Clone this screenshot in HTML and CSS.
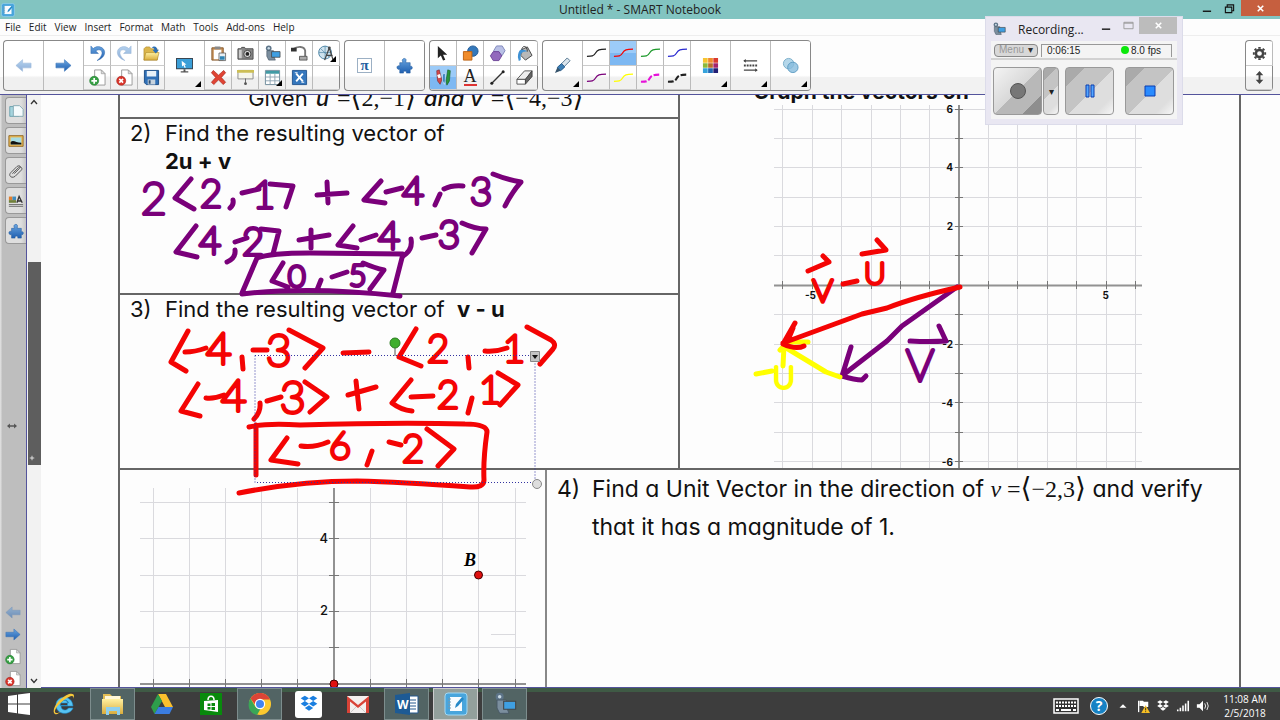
FILE: index.html
```html
<!DOCTYPE html>
<html lang="en">
<head>
  <meta charset="UTF-8">
  <meta name="viewport" content="width=device-width, initial-scale=1">
  <title>Untitled * - SMART Notebook</title>
  <link rel="stylesheet" href="styles.css">
</head>
<body>
  <!-- shared icons -->
  <svg class="sprite" aria-hidden="true">
    <defs>
      <linearGradient id="gBlue" x1="0" y1="0" x2="0" y2="1"><stop offset="0" stop-color="#6aa5e0"/><stop offset="1" stop-color="#1f5fb0"/></linearGradient>
      <linearGradient id="gFolder" x1="0" y1="0" x2="0" y2="1"><stop offset="0" stop-color="#fff0a0"/><stop offset="1" stop-color="#d9ac3c"/></linearGradient>
      <symbol id="arrow" viewBox="0 0 18 14"><path d="M1 4.500h9V.8L17 7l-7 6.200V9.500H1z" fill="url(#gBlue)" stroke="#3a74b8" stroke-width=".6"/></symbol>
      <symbol id="undo" viewBox="0 0 18 18"><path d="M2 1v8h8L7.200 6.400C11 3.500 15 6 13.500 10c-.8 2.500-2.500 4.500-5 6.500C14 14.500 17 11 16.500 7 16 2.500 9-.5 4.500 3.800z" fill="url(#gBlue)" stroke="#2f67ab" stroke-width=".5"/></symbol>
      <symbol id="page" viewBox="0 0 18 18"><path d="M6 1h7l4 4v12H6z" fill="#fff" stroke="#999"/><path d="M13 1v4h4z" fill="#ddd" stroke="#999" stroke-width=".7"/></symbol>
      <symbol id="pageAdd" viewBox="0 0 18 18"><use href="#page"/><circle cx="5.500" cy="12.500" r="4.800" fill="#37a044" stroke="#1d7a2c" stroke-width=".6"/><path d="M5.500 9.500v6M2.500 12.500h6" stroke="#fff" stroke-width="1.800"/></symbol>
      <symbol id="pageDel" viewBox="0 0 18 18"><use href="#page"/><circle cx="5.500" cy="12.500" r="4.800" fill="#d9362c" stroke="#a11d16" stroke-width=".6"/><path d="M3.500 10.500l4 4M7.500 10.500l-4 4" stroke="#fff" stroke-width="1.800"/></symbol>
      <symbol id="folder" viewBox="0 0 18 18"><path d="M1 4l2-2h4l1.500 2H15v12H1z" fill="#dcb64c" stroke="#a8821f" stroke-width=".6"/><path d="M1 16L3 8h14l-2 8z" fill="url(#gFolder)" stroke="#a8821f" stroke-width=".6"/><path d="M9 3c3-3 6-1 6 2h2l-3.500 4L10 5h2c0-1.500-1-2.500-3-2z" fill="#2d6fb5"/></symbol>
      <symbol id="save" viewBox="0 0 18 18"><path d="M1.500 1.500h15v15h-13l-2-2z" fill="#2f6fb6" stroke="#1c4c86"/><path d="M4 2h10v6H4z" fill="#e7f0f8"/><path d="M5 11h8v5.500H5z" fill="#c7d3de"/><path d="M6 12h2v3.500H6z" fill="#2b4c72"/></symbol>
      <symbol id="screen" viewBox="0 0 18 18"><path d="M0 1h18v12H0z" fill="#3a4652"/><path d="M1 2h16v10H1z" fill="#3b9fd8"/><path d="M6 4l5 4-2 .3L10.500 11 9 11.500 8 8.800 6.400 10z" fill="#fff"/><path d="M8 13h2v2h3v1.500H5V15h3z" fill="#555"/></symbol>
      <symbol id="paste" viewBox="0 0 18 18"><path d="M2 3h12v13H2z" fill="#c8925a" stroke="#86592a"/><path d="M4 5h8v10H4z" fill="#fff"/><path d="M5 1.500h6v3H5z" fill="#888"/><path d="M9.500 8.500h7v8h-7z" fill="#e8eef2" stroke="#555" stroke-width=".8"/><path d="M10.500 12h5v3.500h-5z" fill="#2f84b4"/></symbol>
      <symbol id="cross" viewBox="0 0 18 18"><path d="M3.500 1.500L9 6.500l5.500-5 2 2.500L12 9l4.500 5-2.500 2.500-5-5-5 5L1.500 14 6 9 1.500 4z" fill="#e04434" stroke="#a92318" stroke-width=".7"/></symbol>
      <symbol id="camera" viewBox="0 0 18 18"><path d="M1 4h3l1-1.500h3L9 4h8v11H1z" fill="#888" stroke="#4c4c4c"/><path d="M2 5h3v9H2z" fill="#ccc"/><circle cx="11" cy="9.500" r="3.800" fill="#ddd" stroke="#444"/><circle cx="11" cy="9.500" r="2" fill="#222"/></symbol>
      <symbol id="shade" viewBox="0 0 18 18"><path d="M1 1.500h16v9H1z" fill="#f7f7ea" stroke="#888"/><path d="M0 1h18v3H0z" fill="#cdbf54"/><path d="M9 10v5" stroke="#666"/><circle cx="9" cy="15.500" r="1.500" fill="#555"/></symbol>
      <symbol id="camcorder" viewBox="0 0 18 18"><circle cx="5" cy="3.500" r="3" fill="#5d7488"/><circle cx="5" cy="3.500" r="1.300" fill="#c9dae5"/><path d="M3 6h7v5l2 5H5L3 12z" fill="#7b8e9e" stroke="#485866" stroke-width=".7"/><path d="M8 7h9v6H8z" fill="#3f9fe2" stroke="#444" stroke-width=".8"/></symbol>
      <symbol id="table" viewBox="0 0 18 18"><path d="M1.500 1.500h15v15h-15z" fill="#fff" stroke="#6d8a9b"/><path d="M2 2h14v3H2z" fill="#419ba5"/><path d="M2 8.500h14M2 12.500h14M6.500 5v11M11.500 5v11" stroke="#8fa5b2"/></symbol>
      <symbol id="doccam" viewBox="0 0 18 18"><path d="M2 4.500C7 1 14 1 15 6v6" fill="none" stroke="#777" stroke-width="2"/><path d="M0 3h6v4H0z" fill="#333"/><path d="M9 12h8v4H9z" fill="#aaa" stroke="#444" stroke-width=".8"/></symbol>
      <symbol id="fx" viewBox="0 0 18 18"><path d="M1.500 1.500h15v15h-15z" fill="#3577bd" stroke="#245691"/><path d="M5.500 5l7 8M12.500 5l-7 8" stroke="#fff" stroke-width="2"/><path d="M4 4h3M11 14h3" stroke="#fff"/></symbol>
      <symbol id="compass" viewBox="0 0 18 18"><circle cx="7.500" cy="8" r="6.800" fill="#cfe3ee" stroke="#4a83a4"/><path d="M1 8h13M7.500 1v14M3 4l9 9" stroke="#4a83a4" stroke-width=".7"/><path d="M12 3l-5 13M12 3l4 13M8.500 11h7" stroke="#444" stroke-width="1.300"/><circle cx="12" cy="3" r="1.500" fill="#444"/></symbol>
      <symbol id="puzzle" viewBox="0 0 18 18"><path d="M7 5c-2-4 5-5 3.500-.5V6H15v4c3-1.500 3 4 0 3v4h-4c1-3-4-3-3 0H4v-4C0 14 0 8 4 9.500V6h3z" fill="url(#gBlue)" stroke="#245ca0" stroke-width=".6"/></symbol>
      <symbol id="cursor" viewBox="0 0 18 18"><path d="M3 1v13l3.200-3 2.300 5.500 2.400-1-2.400-5.300H13z" fill="#222"/></symbol>
      <symbol id="shapes" viewBox="0 0 18 18"><circle cx="11.500" cy="6.500" r="5.500" fill="#3478bb" stroke="#235b96"/><path d="M1.500 7h9v9h-9z" fill="#f08c2c" stroke="#bd6211"/></symbol>
      <symbol id="polys" viewBox="0 0 18 18"><path d="M8 1h6l3 5-3 5H8L5 6z" fill="#b9c0e6" stroke="#7d86ba"/><path d="M4.500 7h6l3 4.500-3 5h-6l-3-5z" fill="#9269bd" stroke="#6c4598"/></symbol>
      <symbol id="bucket" viewBox="0 0 18 18"><path d="M6 5l6-3 5 9-7 5-5-5z" fill="#b8b8b8" stroke="#444"/><path d="M6 6c0-6 6-6 6 1" fill="none" stroke="#333"/><path d="M5 5c3 0 5 0 7 2-3 0-5 0-7 3v6L3 17l-1-4c0-4 1-7 3-8z" fill="#3e91d4"/></symbol>
      <symbol id="pens" viewBox="0 0 20 20"><path d="M2 2l3-1 3 12-2 5-3-4z" fill="#d3494b" stroke="#7d2527" stroke-width=".7"/><path d="M2.500 7l3.500-1 1 4-3 1z" fill="#fff"/><path d="M9 6l3-1v9l-1 4-2-4z" fill="#2d7bbd" stroke="#fff" stroke-width=".6"/><path d="M15 1l3 1-1 12-3 5-1-5z" fill="#29943b" stroke="#165d22" stroke-width=".7"/></symbol>
      <symbol id="line" viewBox="0 0 18 18"><path d="M3 15L15 3" stroke="#333" stroke-width="1.400"/><circle cx="3" cy="15" r="1.600" fill="#222"/><circle cx="15" cy="3" r="1.600" fill="#222"/></symbol>
      <symbol id="eraser" viewBox="0 0 18 18"><path d="M1 11L9 2h8l-7 9z" fill="#eee" stroke="#555"/><path d="M1 11h9v5H1z" fill="#fff" stroke="#555"/><path d="M10 11l7-9v6l-7 8z" fill="#666" stroke="#444"/></symbol>
      <symbol id="pen" viewBox="0 0 18 18"><path d="M14 1l3 3-9 9-3-3z" fill="#dce6ed" stroke="#54758f"/><path d="M8 7l3.500 3.500L7 14.500 3.500 11z" fill="#3d7fb5" stroke="#275c8c"/><path d="M3.500 11L7 14.500 1 17z" fill="#36546c"/></symbol>
      <symbol id="stroke" viewBox="0 0 22 12"><path d="M1 9.500c5 0 7 0 9-3.500s4-4 11-4" fill="none" stroke="currentColor" stroke-width="1.300"/></symbol>
      <symbol id="dashed" viewBox="0 0 22 12"><path d="M1 10c5 0 7 0 9-3.500s4-4 11-4" fill="none" stroke="currentColor" stroke-width="2.200" stroke-dasharray="6 2"/></symbol>
      <symbol id="swatches" viewBox="0 0 18 18"><path d="M1 1h5v5H1z" fill="#f6c431"/><path d="M6.500 1h5v5h-5z" fill="#ef8b2d"/><path d="M12 1h5v5h-5z" fill="#d93a2f"/><path d="M1 6.500h5v5H1z" fill="#8cb83b"/><path d="M6.500 6.500h5v5h-5z" fill="#b56c2a"/><path d="M12 6.500h5v5h-5z" fill="#a3246c"/><path d="M1 12h5v5H1z" fill="#36a3dc"/><path d="M6.500 12h5v5h-5z" fill="#2168b4"/><path d="M12 12h5v5h-5z" fill="#231f74"/></symbol>
      <symbol id="weights" viewBox="0 0 18 18"><path d="M2 4h14M2 14h14" stroke="#444" stroke-width="1.300"/><path d="M2 9h14" stroke="#444" stroke-width="2" stroke-dasharray="2 1"/><path d="M4 2L1.500 4 4 6M14 12l2.500 2-2.500 2" fill="#444"/></symbol>
      <symbol id="alpha" viewBox="0 0 18 18"><circle cx="7" cy="7" r="5.500" fill="#b5d7ea" stroke="#79adc9"/><circle cx="11.500" cy="11" r="5.500" fill="#86bcdd" fill-opacity=".8" stroke="#5f9cc2"/></symbol>
      <symbol id="gear" viewBox="0 0 18 18"><circle cx="9" cy="9" r="3.800" fill="none" stroke="#444" stroke-width="2.600"/><path d="M9 2v2M9 14v2M2 9h2M14 9h2M4 4l1.500 1.500M12.500 12.500L14 14M14 4l-1.500 1.500M5.500 12.500L4 14" stroke="#444" stroke-width="2.600"/></symbol>
      <symbol id="updown" viewBox="0 0 18 18"><path d="M9 2l4 4.500h-3v5h3L9 16l-4-4.500h3v-5H5z" fill="#444"/></symbol>
      <symbol id="pages" viewBox="0 0 18 18"><path d="M2 4h10v11H2z" fill="#a5d4de" stroke="#669eac"/><path d="M6 3h7l4 4v8H6z" fill="#f4fafc" stroke="#7ea5b0"/></symbol>
      <symbol id="gallery" viewBox="0 0 18 18"><path d="M1 3h16v12H1z" fill="#e8b756" stroke="#8e6521"/><path d="M3 5h12v8H3z" fill="#a6dce4"/><path d="M3 10c3-3 6 1 12 1v2H3z" fill="#111"/></symbol>
      <symbol id="clip" viewBox="0 0 18 18"><path d="M5 12l7-7c2-2 5 1 3 3l-7 7c-4 3-8-1-5-4l7-7c3-2 5 0 3 2l-6 6" fill="none" stroke="#555" stroke-width="1.100"/></symbol>
      <symbol id="props" viewBox="0 0 18 18"><path d="M1 4h4v4H1z" fill="#e07e2e"/><path d="M5 4h4v4H5z" fill="#3e8dc0"/><path d="M1 8h8v3H1z" fill="#70803b"/><path d="M10 11l2.500-7L16 11M11 9h4" fill="none" stroke="#333" stroke-width="1.500"/><path d="M1 13h16M1 15h16" stroke="#666"/></symbol>
      <symbol id="notebook" viewBox="0 0 24 24"><path d="M4 1h16q3 0 3 3v16q0 3-3 3H4q-3 0-3-3V4q0-3 3-3z" fill="#48a5dc" stroke="#a2d8f3"/><path d="M6 5h12v14H6z" fill="#f8fcff"/><path d="M4 7h3M4 10h3M4 13h3M4 16h3" stroke="#7898aa"/><path d="M18 5l-6 7-1 4 3-2 6-7z" fill="#2589c8"/></symbol>
      <symbol id="dropbox" viewBox="0 0 24 24"><path d="M7 2l5 3.200-5 3.300-5-3.300zM17 2l5 3.200-5 3.300-5-3.300zM7 8.500l5 3.300L7 15l-5-3.200zM17 8.500l5 3.300-5 3.200-5-3.200zM12 13.500l5 3.200-5 3.300-5-3.300z" fill="currentColor"/></symbol>
    </defs>
  </svg>

  <header class="titlebar">
    <svg class="app-icon" viewBox="0 0 24 24"><use href="#notebook"/></svg>
    <h1>Untitled * - SMART Notebook</h1>
    <div class="win-buttons">
      <button aria-label="Minimize"><svg viewBox="0 0 12 12"><path d="M2 9h9" stroke="#111" stroke-width="1.500"/></svg></button>
      <button aria-label="Restore"><svg viewBox="0 0 12 12"><path d="M1.500 4.500h7v6h-7zM3.500 4V2h7v6.500h-2M3.500 2h7" fill="none" stroke="#111" stroke-width="1.200"/></svg></button>
      <button class="close" aria-label="Close"><svg viewBox="0 0 12 12"><path d="M3 3l6 6M9 3L3 9" stroke="#fff" stroke-width="1.700"/></svg></button>
    </div>
  </header>

  <nav class="menubar">
    <a href="#file">File</a>
    <a href="#edit">Edit</a>
    <a href="#view">View</a>
    <a href="#insert">Insert</a>
    <a href="#format">Format</a>
    <a href="#math">Math</a>
    <a href="#tools">Tools</a>
    <a href="#addons">Add-ons</a>
    <a href="#help">Help</a>
  </nav>

  <div class="toolbar">
    <div class="group">
      <button class="big faded" aria-label="Previous page"><svg class="flip"><use href="#arrow"/></svg></button>
      <button class="big" aria-label="Next page"><svg><use href="#arrow"/></svg></button>
      <button aria-label="Undo"><svg><use href="#undo"/></svg></button>
      <button aria-label="Add page"><svg><use href="#pageAdd"/></svg></button>
      <button class="faded" aria-label="Redo"><svg class="flip"><use href="#undo"/></svg></button>
      <button aria-label="Delete page"><svg><use href="#pageDel"/></svg></button>
      <button aria-label="Open"><svg><use href="#folder"/></svg></button>
      <button aria-label="Save"><svg><use href="#save"/></svg></button>
      <button class="big more" aria-label="View screens"><svg><use href="#screen"/></svg></button>
      <button aria-label="Paste"><svg><use href="#paste"/></svg></button>
      <button aria-label="Delete"><svg><use href="#cross"/></svg></button>
      <button aria-label="Capture"><svg><use href="#camera"/></svg></button>
      <button aria-label="Screen shade"><svg><use href="#shade"/></svg></button>
      <button aria-label="Recorder"><svg><use href="#camcorder"/></svg></button>
      <button class="more" aria-label="Table"><svg><use href="#table"/></svg></button>
      <button aria-label="Document camera"><svg><use href="#doccam"/></svg></button>
      <button aria-label="Equation"><svg><use href="#fx"/></svg></button>
      <button class="more" aria-label="Measurement tools"><svg><use href="#compass"/></svg></button>
      <button aria-label="Empty slot"></button>
    </div>
    <div class="group">
      <button class="big" aria-label="Math"><span class="pi">π</span></button>
      <button class="big" aria-label="Add-ons"><svg><use href="#puzzle"/></svg></button>
    </div>
    <div class="group">
      <button aria-label="Select"><svg><use href="#cursor"/></svg></button>
      <button class="on" aria-label="Pens"><svg><use href="#pens"/></svg></button>
      <button aria-label="Shapes"><svg><use href="#shapes"/></svg></button>
      <button aria-label="Text"><span class="text-tool">A</span></button>
      <button aria-label="Polygons"><svg><use href="#polys"/></svg></button>
      <button aria-label="Lines"><svg><use href="#line"/></svg></button>
      <button aria-label="Fill"><svg><use href="#bucket"/></svg></button>
      <button aria-label="Eraser"><svg><use href="#eraser"/></svg></button>
    </div>
    <div class="group">
      <button class="big more" aria-label="Pen type"><svg><use href="#pen"/></svg></button>
      <button class="black" aria-label="Black pen"><svg class="wide"><use href="#stroke"/></svg></button>
      <button class="purple" aria-label="Purple pen"><svg class="wide"><use href="#stroke"/></svg></button>
      <button class="red on" aria-label="Red pen"><svg class="wide"><use href="#stroke"/></svg></button>
      <button class="yellow" aria-label="Yellow pen"><svg class="wide"><use href="#stroke"/></svg></button>
      <button class="green" aria-label="Green pen"><svg class="wide"><use href="#stroke"/></svg></button>
      <button class="magenta" aria-label="Magenta dashes"><svg class="wide"><use href="#dashed"/></svg></button>
      <button class="blue" aria-label="Blue pen"><svg class="wide"><use href="#stroke"/></svg></button>
      <button class="black" aria-label="Black dashes"><svg class="wide"><use href="#dashed"/></svg></button>
      <button class="big more" aria-label="Colors"><svg><use href="#swatches"/></svg></button>
      <button class="big more" aria-label="Line style"><svg><use href="#weights"/></svg></button>
      <button class="big more" aria-label="Transparency"><svg><use href="#alpha"/></svg></button>
    </div>
    <div class="group last">
      <button aria-label="Settings"><svg><use href="#gear"/></svg></button>
      <button aria-label="Move toolbar"><svg><use href="#updown"/></svg></button>
    </div>
  </div>

  <main class="workspace">
    <aside class="sidebar">
      <button class="tab" aria-label="Page sorter"><svg><use href="#pages"/></svg></button>
      <button class="tab" aria-label="Gallery"><svg><use href="#gallery"/></svg></button>
      <button class="tab" aria-label="Attachments"><svg><use href="#clip"/></svg></button>
      <button class="tab" aria-label="Properties"><svg><use href="#props"/></svg></button>
      <button class="tab" aria-label="Add-ons"><svg><use href="#puzzle"/></svg></button>
      <button class="swap" aria-label="Move sidebar"><svg viewBox="0 0 12 8"><path d="M0 4l3.500-3v2h5V1L12 4 8.500 7V5h-5v2z" fill="#555"/></svg></button>
      <div class="side-nav">
        <button class="faded" aria-label="Back"><svg class="flip"><use href="#arrow"/></svg></button>
        <button aria-label="Forward"><svg><use href="#arrow"/></svg></button>
        <button aria-label="New page"><svg><use href="#pageAdd"/></svg></button>
        <button aria-label="Remove page"><svg><use href="#pageDel"/></svg></button>
      </div>
    </aside>

    <div class="scroller">
      <svg viewBox="0 0 8 6"><path d="M1 5l3-3.500L7 5" fill="none" stroke="#333" stroke-width="1.300"/></svg>
      <div class="thumb"><svg viewBox="0 0 8 8"><path d="M4 1v6M1 4h6" stroke="#fff"/></svg></div>
      <svg viewBox="0 0 8 6"><path d="M1 1l3 3.500L7 1" fill="none" stroke="#333" stroke-width="1.300"/></svg>
    </div>

    <section class="page">
      <div class="sheet">
        <div class="top">
          <div class="problems">
            <p class="given">Given <i>u</i> <span class="math">=<b>⟨</b>2,−1<b>⟩</b></span> <i>and v</i> <span class="math">=<b>⟨</b>−4,−3<b>⟩</b></span></p>
            <div class="question">
              <span>2)</span>
              <p>Find the resulting vector of<br><strong>2u + v</strong></p>
            </div>
            <div class="question">
              <span>3)</span>
              <p>Find the resulting vector of &nbsp;<strong>v - u</strong></p>
            </div>
          </div>
          <div class="plot">
            <h2>Graph the vectors on</h2>
            <svg width="370" height="363" viewBox="775 105 370 363">
              <path class="grid" d="M783.500 105v363M813.500 105v363M842.500 105v363M872.500 105v363M901.500 105v363M930.500 105v363M989.500 105v363M1018.500 105v363M1048.500 105v363M1077.500 105v363M1107.500 105v363M1136.500 105v363"/>
              <path class="grid" d="M775 109.500h368M775 138.500h368M775 167.500h368M775 197.500h368M775 226.500h368M775 255.500h368M775 314.500h368M775 344.500h368M775 373.500h368M775 402.500h368M775 432.500h368M775 461.500h368"/>
              <path class="axis" d="M960 105v363M775 285.500h368"/>
              <path class="tick" d="M956 109.500h8M956 138.500h8M956 167.500h8M956 197.500h8M956 226.500h8M956 255.500h8M956 314.500h8M956 344.500h8M956 373.500h8M956 402.500h8M956 432.500h8M956 461.500h8M783.500 281v8M813.500 281v8M842.500 281v8M872.500 281v8M901.500 281v8M930.500 281v8M989.500 281v8M1018.500 281v8M1048.500 281v8M1077.500 281v8M1107.500 281v8M1136.500 281v8"/>
              <g class="nums">
                <text x="954" y="113">6</text>
                <text x="954" y="171">4</text>
                <text x="954" y="230">2</text>
                <text x="954" y="348">-2</text>
                <text x="954" y="407">-4</text>
                <text x="954" y="466">-6</text>
                <text x="817" y="299">-5</text>
                <text x="1110" y="299">5</text>
              </g>
            </svg>
          </div>
        </div>
        <div class="bottom">
          <div class="plot">
            <svg width="388" height="202" viewBox="138 487 388 202">
              <path class="grid" d="M152.500 488v200M188.500 488v200M224.500 488v200M260.500 488v200M296.500 488v200M369.500 488v200M405.500 488v200M441.500 488v200M477.500 488v200M514.500 488v200M139 502.500h386M139 538.500h386M139 575.500h386M139 611.500h386M139 647.500h386"/>
              <path class="axis" d="M333 488v200M139 684h386"/>
              <path class="tick" d="M328 502.500h10M328 538.500h10M328 575.500h10M328 611.500h10M328 647.500h10M152.500 679v9M188.500 679v9M224.500 679v9M260.500 679v9M296.500 679v9M369.500 679v9M405.500 679v9M441.500 679v9M477.500 679v9M514.500 679v9"/>
              <path class="grid" d="M490 634.500h24"/>
              <g class="nums large">
                <text x="327" y="543">4</text>
                <text x="327" y="615">2</text>
              </g>
              <text class="point-name" x="463" y="566">B</text>
              <circle class="point" cx="477.500" cy="575" r="4"/>
              <circle class="point" cx="333" cy="684" r="4"/>
            </svg>
          </div>
          <div class="question tall">
            <span>4)</span>
            <p>Find a Unit Vector in the direction of <span class="math"><em>v</em> =<b>⟨</b>−2,3<b>⟩</b></span> and verify that it has a magnitude of 1.</p>
          </div>
        </div>
      </div>

      <!-- pen layer, in window coordinates -->
      <svg class="ink">
        <g transform="translate(-41 -95)">
          <g class="pen purple">
            <path d="M191 179L175 198L194 209M233 200q1 5-3 8M242 193L259 189M270 184L293 186L286 207M317 195L347 193M327 182L328 203M381 181L364 200L385 203M386 192L402 188M440 194L435 205M444 189Q452 185 463 186M493 174Q508 180 521 182Q512 192 505 206"/>
            <path d="M196 226L176 252L197 257M235 250Q236 258 227 262M235 242L247 238M261 229L279 231L273 254M299 240L329 235M311 230L311 248M353 226L338 245L357 248M361 240L376 235M411 239Q413 250 403 256M422 238L436 235M462 223Q475 229 486 229L472 253"/>
            <path d="M257 258L242 293M257 258Q270 253 310 253L403 254L393 293M242 294Q310 286 400 296M283 263L272 281L288 287M321 280L317 290M332 277L347 272M363 263Q375 268 384 270L370 289"/>
            <path d="M957 287L902 326L887 341L843 375M851 347L842 376Q855 380 862 380L866 376M910 341Q930 342 946 341L939 326"/>
            <text class="lg" x="141" y="214">2</text>
            <text x="200" y="207">2</text>
            <text x="253" y="208">1</text>
            <text x="402" y="204">4</text>
            <text x="470" y="205">3</text>
            <text x="199" y="254">4</text>
            <text x="242" y="255">2</text>
            <text x="378" y="249">4</text>
            <text x="438" y="248">3</text>
            <text class="sm" x="288" y="287">0</text>
            <text class="sm" x="349" y="286">5</text>
            <text class="lg" x="906" y="381">V</text>
          </g>
          <g class="pen yellow">
            <path d="M840 377L826 372L788 349M780 350L788 342L808 342M784 346L783 366M756 374L772 371"/>
            <text class="sm" x="773" y="388">U</text>
          </g>
          <g class="pen red">
            <path d="M188 331L171 362L186 371M185 352Q195 352 206 348M242 357L243 369M253 350L267 350M289 330L323 348L305 368M343 353L369 352M416 329L399 357L421 366M468 357L469 368M485 351Q496 352 507 348M527 327L551 340Q557 344 553 349L540 364"/>
            <path d="M198 384L181 411L200 416M206 398Q214 399 224 395M260 403Q261 412 254 419M267 401L281 397M305 382L327 397L310 412M348 395L376 387M356 381L359 409M411 380L392 403Q401 410 412 411M411 397L433 396M472 398L468 413M498 373L518 385L500 405"/>
            <path d="M256 425L256 475M249 427Q265 423 300 425Q400 422 465 424Q487 424 487 432Q483 460 484 480Q484 488 470 487Q400 482 357 481Q300 481 239 493M287 438L271 460L298 464M301 446Q314 448 328 442M372 451L367 465M389 442L401 445M427 429L454 449L438 466"/>
            <path d="M960 287Q915 297 887 308L862 314L783 343M795 323L783 344Q796 350 804 346M793 328L788 340M808 271L829 262L823 256M862 254L886 250L877 240M843 284L857 281"/>
            <text class="lg" x="206" y="364">4</text>
            <text class="lg" x="266" y="366">3</text>
            <text x="427" y="362">2</text>
            <text x="503" y="362">1</text>
            <text class="lg" x="221" y="411">4</text>
            <text class="lg" x="280" y="413">3</text>
            <text x="437" y="408">2</text>
            <text x="479" y="403">1</text>
            <text x="329" y="459">6</text>
            <text x="402" y="462">2</text>
            <text class="lg" x="812" y="302">v</text>
            <text class="sm" x="864" y="284">U</text>
          </g>
          <g class="selection">
            <path d="M255 355.500h280v127h-280z"/>
            <path class="stem" d="M395 348v8"/>
            <circle class="rotate" cx="395" cy="343" r="5"/>
            <path class="drop" d="M530.500 351.500h9v10h-9z"/>
            <path class="caret" d="M532 355h6l-3 4z"/>
            <circle class="resize" cx="537" cy="484" r="4.500"/>
          </g>
        </g>
      </svg>
    </section>
  </main>

  <div class="recorder">
    <div class="rec-title">
      <svg><use href="#camcorder"/></svg>
      <h2>Recording...</h2>
      <button aria-label="Minimize recorder"><svg viewBox="0 0 12 12"><path d="M1 10h9" stroke="#111" stroke-width="1.500"/></svg></button>
      <button aria-label="Maximize recorder"><svg viewBox="0 0 12 12"><path d="M1 2.500h10v7H1zM1 3.500h10" fill="none" stroke="#999"/></svg></button>
      <button class="close" aria-label="Close recorder"><svg viewBox="0 0 12 12"><path d="M3 3l6 6M9 3L3 9" stroke="#fff" stroke-width="1.700"/></svg></button>
    </div>
    <div class="rec-body">
      <div class="rec-status">
        <button class="rec-menu">Menu <span>▾</span></button>
        <div class="readout"><span>0:06:15</span><span class="fps">8.0 fps</span></div>
      </div>
      <div class="rec-controls">
        <button class="shut" aria-label="Record"><svg viewBox="0 0 18 18"><circle cx="9" cy="9" r="7.500" fill="#777" stroke="#555"/></svg></button>
        <button class="narrow" aria-label="Record options">▾</button>
        <button aria-label="Pause"><svg viewBox="0 0 18 18"><path d="M5 3h3v12H5zM10 3h3v12h-3z" fill="#53a6ff" stroke="#0b3db0"/></svg></button>
        <button aria-label="Stop"><svg viewBox="0 0 18 18"><path d="M4 4h10v10H4z" fill="#298bff" stroke="#0b3db0"/></svg></button>
      </div>
    </div>
  </div>

  <footer class="taskbar">
    <button class="start" aria-label="Start"><svg viewBox="0 0 24 24"><path d="M1 4l9-1.300v8.800H1zM11 2.500L23 1v10.500H11zM1 12.500h9v8.800L1 20zM11 12.500h12V23l-12-1.500z" fill="#fff"/></svg></button>
    <button aria-label="Internet Explorer"><svg viewBox="0 0 24 24"><path d="M8 13.500h7.500V10C13 7 9 8 8 13.500zM21 14H9c0 5 6 5 7.500 2H21c-3 8-17 7-17-3s16-11 17 1zM9 11h7.500c-1-4-6.500-4-7.500 0z" fill="#56c3f2" fill-rule="evenodd" stroke="#1d8fd0" stroke-width=".6"/><path d="M3 22C-2 18 8 5 17 2c5-1 6 1 4 5 1-3-1-4-4-2C10 8 2 17 3 20c1 2 4 1 6-1-2 2-4 4-6 3z" fill="#f6c83a"/></svg></button>
    <button class="open" aria-label="File Explorer"><svg viewBox="0 0 24 24"><path d="M2 2h7l2 2h9v17H2z" fill="#e3bd55"/><path d="M4 4h15v6H4z" fill="#fff7d9"/><path d="M1 7h21v15H1z" fill="url(#gFolder)"/><path d="M5 15h14v8h-3v-4H8v4H5z" fill="#8fd0ee"/></svg></button>
    <button aria-label="Google Drive"><svg viewBox="0 0 24 24"><path d="M8 2h8l7 13h-8z" fill="#fbc02d"/><path d="M8 2l4 7-7.500 13L1 15z" fill="#2e9e4b"/><path d="M8.500 15H23l-3.500 7h-15z" fill="#3b7de0"/></svg></button>
    <button aria-label="Store"><svg viewBox="0 0 24 24"><path d="M1 1h22v22H1z" fill="#088a0c"/><path d="M5 9l14-1v12L5 18z" fill="#fff"/><path d="M9 8c0-5 6-5 6 0" fill="none" stroke="#fff" stroke-width="1.500"/><path d="M8.500 11.500h3V14h-3zM12.500 11h3.500v3h-3.500zM8.500 15h3v2.500h-3zM12.500 15H16v3h-3.500z" fill="#088a0c"/></svg></button>
    <button class="open" aria-label="Chrome"><svg viewBox="0 0 24 24"><circle cx="12" cy="12" r="11" fill="#fbc92f"/><path d="M2.500 6.500C8-2 19 0 22 7.500H12L8 14z" fill="#dc4437"/><path d="M2.500 6.500l5 8.500 5 2-3.500 6C0 21-1 12 2.500 6.500z" fill="#3aa757"/><circle cx="12" cy="12" r="5.200" fill="#fff"/><circle cx="12" cy="12" r="4" fill="#4284f0"/></svg></button>
    <button aria-label="Dropbox"><span class="dbx"><svg viewBox="0 0 24 24"><use href="#dropbox"/></svg></span></button>
    <button aria-label="Gmail"><svg viewBox="0 0 24 24"><path d="M1 4h22v17H1z" fill="#f3efee"/><path d="M4 21l8-8 8 8" fill="none" stroke="#ccc"/><path d="M1 21V4l11 9 11-9v17h-3V9.500L12 16l-8-6.500V21z" fill="#d94337"/></svg></button>
    <button class="open" aria-label="Word"><svg viewBox="0 0 24 24"><path d="M11 4h12v17H11z" fill="#fff" stroke="#24588f"/><path d="M14 8h7M14 11h7M14 14h7M14 17h7" stroke="#24588f"/><path d="M0 3l15-2v22L0 21z" fill="#1d5a94"/><text class="word-w" x="2" y="17">W</text></svg></button>
    <button class="open active" aria-label="SMART Notebook"><svg><use href="#notebook"/></svg></button>
    <button class="open" aria-label="Recorder"><svg><use href="#camcorder"/></svg></button>

    <div class="tray">
      <svg class="keyboard" viewBox="0 0 26 16"><path d="M1 1h24v14H1z" fill="#333" stroke="#fff" stroke-width="1.500"/><path d="M3 4.500h20M3 8h20" stroke="#fff" stroke-width="2" stroke-dasharray="2 1"/><path d="M3 12h3M8 12h10M20 12h3" stroke="#fff" stroke-width="2"/></svg>
      <span class="help">?</span>
      <svg viewBox="0 0 16 16"><path d="M4 10l4-4 4 4z" fill="#fff"/></svg>
      <svg viewBox="0 0 16 16"><path d="M3 2v13" stroke="#fff" stroke-width="1.500"/><path d="M4 2h4l1 1h5v6H9L8 8H4z" fill="#fff"/><path d="M11 7l5 9H6z" fill="#f6bf25"/><path d="M11 10v3M11 14v1" stroke="#222"/></svg>
      <svg viewBox="0 0 24 24"><use href="#dropbox"/></svg>
      <svg viewBox="0 0 16 16"><path d="M2 12v2M5 10v4M8 7.500V14M11 5v9M14 2v12" stroke="#fff" stroke-width="1.800"/></svg>
      <svg viewBox="0 0 16 16"><path d="M1 6h3l4-4v12l-4-4H1z" fill="#fff"/><path d="M10 5q2 3 0 6M12.500 3.500q3 4.500 0 9" fill="none" stroke="#fff"/></svg>
      <time>11:08 AM<br>2/5/2018</time>
    </div>
  </footer>
</body>
</html>
```
FILE: styles.css
```css
*{
  box-sizing: border-box;
  margin: 0;
  padding: 0;
}

body{
  display: flex;
  flex-direction: column;
  height: 100vh;
  overflow: hidden;
  background: #fdfdfd;
  color: #222;
  font-family: "Open Sans", sans-serif;
  font-size: 10px;
}

button{
  border: 0;
  background: none;
  color: inherit;
  font: inherit;
}

svg{
  display: block;
}

.sprite{
  position: absolute;
  width: 0;
  height: 0;
}

.flip{
  transform: scaleX(-1);
}

.faded svg{
  opacity: .5;
}

.black{ color: #222; }
.purple{ color: #7a007a; }
.red{ color: #f40404; }
.yellow{ color: #ffff00; }
.green{ color: #1e9a2c; }
.magenta{ color: #e612d8; }
.blue{ color: #2a2ad0; }

/* title bar */
.titlebar{
  display: grid;
  grid-template-columns: 1fr auto 1fr;
  align-items: center;
  height: 19px;
  background: #82c4c1;
}

.titlebar h1{
  font-size: 12px;
  font-weight: 400;
  line-height: 19px;
}

.app-icon{
  width: 14px;
  height: 14px;
  margin-left: 1px;
}

.win-buttons{
  display: flex;
  justify-content: flex-end;
  align-self: start;
}

.win-buttons button{
  display: grid;
  place-items: center;
  width: 23px;
  height: 16px;
}

.win-buttons svg{
  width: 11px;
  height: 11px;
}

.win-buttons .close{
  width: 39px;
  background: #c65f3f;
}

/* menu */
.menubar{
  display: flex;
  gap: 8px;
  height: 17px;
  padding-left: 5px;
  border-bottom: 1px solid #eee;
  line-height: 17px;
}

.menubar a{
  color: #222;
  text-decoration: none;
}

/* toolbar */
.toolbar{
  display: flex;
  gap: 4px;
  padding: 4px 7px 3px 3px;
  background: linear-gradient(#fdfdfd 70%, #f2f2f2 70%);
}

.group{
  display: grid;
  grid-auto-flow: column;
  grid-template-rows: 25px 24px;
  border: 1px solid #888;
  border-right-width: 0;
  border-radius: 4px;
  overflow: hidden;
  background: linear-gradient(#fff 70%, #f0f0f0 75%);
}

.group button{
  position: relative;
  display: grid;
  place-items: center;
  width: 27px;
  border-right: 1px solid #bbb;
}

.group button:not(.big){
  border-bottom: 1px solid #ccc;
}

.group .big{
  grid-row: span 2;
  width: 40px;
}

.group button:last-child{
  border-right-color: #888;
}

.group svg{
  width: 17px;
  height: 17px;
}

.group .wide{
  width: 21px;
  height: 12px;
}

.group .on{
  background: linear-gradient(#9ccbf8 50%, #7db8f2 50%);
}

.more::after{
  content: "";
  position: absolute;
  right: 3px;
  bottom: 3px;
  border: 3px solid #000;
  border-top-color: transparent;
  border-left-color: transparent;
}

.last{
  margin-left: auto;
}

.pi{
  width: 15px;
  height: 15px;
  border: 1px solid #9cb0c4;
  color: #245f9f;
  font-family: "Liberation Serif", serif;
  font-size: 15px;
  font-weight: 700;
  line-height: 12px;
}

.text-tool{
  border-bottom: 2px solid #d33;
  font-family: "Liberation Serif", serif;
  font-size: 18px;
  line-height: 15px;
}

/* workspace */
.workspace{
  display: flex;
  flex: 1;
  min-height: 0;
  border-top: 1px solid #54549c;
}

.sidebar{
  display: flex;
  flex-direction: column;
  width: 27px;
  padding: 2px 0 0 5px;
  border-right: 1px solid #54549c;
  background: linear-gradient(90deg, #ddd 1px, #bebebe 2px);
}

.tab{
  display: grid;
  place-items: center;
  height: 27px;
  margin-bottom: 3px;
  border: 1px solid #999;
  border-right: 0;
  border-radius: 4px 0 0 4px;
  background: linear-gradient(90deg, #dedede 75%, #c5c5c5);
}

.tab svg{
  width: 16px;
  height: 16px;
}

.swap{
  margin: auto 0;
  padding-left: 2px;
}

.swap svg{
  width: 10px;
  height: 8px;
}

.side-nav{
  display: grid;
  gap: 5px;
  padding-bottom: 1px;
}

.side-nav svg{
  width: 16px;
  height: 17px;
}

.scroller{
  display: grid;
  grid-template-rows: 167px 203px 1fr;
  justify-items: center;
  width: 14px;
  background: #f2f2f2;
}

.scroller svg{
  width: 8px;
  height: 6px;
  margin: 4px 0;
}

.scroller > svg:last-child{
  align-self: end;
}

.thumb{
  display: flex;
  align-items: flex-end;
  justify-content: flex-start;
  width: 13px;
  background: #5e5e5e;
}

.page{
  position: relative;
  flex: 1;
  overflow: hidden;
  border-bottom: 1px solid #54549c;
}

/* worksheet */
.sheet{
  margin: 0 39px 0 77px;
  border: solid #666;
  border-width: 0 2px;
  color: #111;
  font-family: Inter, sans-serif;
  font-size: 22px;
  font-feature-settings: "cv11";
}

.top{
  display: grid;
  grid-template-columns: 1fr 1fr;
}

.problems{
  display: grid;
  grid-template-rows: 24px 176px 175px;
  border-right: 2px solid #666;
}

.problems > *,
.plot{
  border-bottom: 2px solid #666;
}

.given{
  display: flex;
  align-items: flex-end;
  justify-content: center;
  gap: 8px;
  padding: 0 0 3px 34px;
  overflow: hidden;
  line-height: 32px;
}

.given i{
  font-weight: 500;
}

.math{
  font-family: "Liberation Serif", serif;
  font-size: 24px;
}

.math b{
  font-family: "DejaVu Sans", sans-serif;
  font-size: 28px;
  font-weight: 400;
  line-height: 20px;
}

.question{
  display: grid;
  grid-template-columns: 35px 1fr;
  align-content: start;
  padding: 0 10px;
  line-height: 28px;
}

.question.tall{
  font-size: 23px;
  line-height: 38px;
}

.plot{
  display: flex;
  flex-direction: column;
  align-items: center;
}

.plot h2{
  align-self: flex-start;
  margin: -17px 0 -1px 74px;
  font-size: 21px;
  line-height: 28px;
}

.bottom{
  display: grid;
  grid-template-columns: 427px 1fr;
}

.bottom .plot{
  padding-top: 17px;
  border-right: 2px solid #888;
  border-bottom: 0;
}

.grid{
  stroke: #dadade;
}

.axis{
  stroke: #929292;
  stroke-width: 2;
}

.tick{
  stroke: #777;
}

.nums{
  fill: #111;
  font-size: 10px;
  font-weight: 700;
  text-anchor: end;
}

.nums.large{
  font-size: 13px;
  font-weight: 500;
}

.point-name{
  font-family: "Liberation Serif", serif;
  font-size: 18px;
  font-style: italic;
  font-weight: 700;
}

.point{
  fill: #e01010;
  stroke: #400;
}

/* ink */
.ink{
  position: absolute;
  top: 0;
  left: 0;
  width: 100%;
  height: 100%;
}

.pen{
  fill: none;
  stroke: currentColor;
  stroke-width: 5;
  stroke-linecap: round;
  stroke-linejoin: round;
}

.pen text{
  fill: currentColor;
  stroke-width: 4;
  font-family: Lato, sans-serif;
  font-size: 38px;
  font-weight: 100;
}

.pen .lg{
  font-size: 44px;
}

.pen .sm{
  font-size: 30px;
}

.selection path{
  fill: none;
  stroke: #3333a0;
  stroke-dasharray: 1 2;
}

.selection .stem{
  stroke: #555;
  stroke-dasharray: none;
}

.selection .rotate{
  fill: #3fae2e;
  stroke: #2b7d20;
}

.selection .drop{
  fill: #c4c4c4;
  stroke: #888;
  stroke-dasharray: none;
}

.selection .caret{
  fill: #111;
  stroke: none;
}

.selection .resize{
  fill: #ddd;
  stroke: #888;
}

/* recorder window */
.recorder{
  position: absolute;
  top: 16px;
  right: 97px;
  width: 198px;
  padding: 0 5px 5px;
  border: 1px solid #dcdcea;
  background: #e9e7f2;
}

.rec-title{
  display: flex;
  align-items: center;
  height: 24px;
}

.rec-title > svg{
  width: 14px;
  height: 14px;
  margin: 0 12px 0 1px;
}

.rec-title h2{
  flex: 1;
  font-size: 12px;
  font-weight: 400;
}

.rec-title button{
  display: grid;
  place-items: center;
  align-self: start;
  width: 22px;
  height: 17px;
}

.rec-title button svg{
  width: 11px;
  height: 11px;
}

.rec-title .close{
  width: 38px;
  background: #bcbcbc;
}

.rec-body{
  background: #f4f4f4;
}

.rec-status{
  display: flex;
  gap: 3px;
  padding: 3px 5px 1px 3px;
  border-bottom: 2px solid #d2d2d2;
  font-family: "Liberation Sans", sans-serif;
}

.rec-menu{
  display: flex;
  justify-content: space-between;
  width: 44px;
  padding: 0 4px;
  border: 1px solid #888;
  border-radius: 4px;
  background: #d8d8d8;
  color: #999;
  line-height: 10px;
}

.rec-menu span{
  color: #333;
}

.readout{
  display: flex;
  flex: 1;
  justify-content: space-between;
  padding: 0 10px 0 5px;
  border: 1px solid #999;
  border-width: 1px 1px 0;
  line-height: 12px;
}

.fps::before{
  content: "";
  display: inline-block;
  width: 8px;
  height: 8px;
  margin-right: 2px;
  border-radius: 50%;
  background: #0be80b;
}

.rec-controls{
  display: flex;
  padding: 7px 3px 4px 2px;
}

.rec-controls button{
  display: grid;
  place-items: center;
  width: 49px;
  height: 48px;
  margin-right: 11px;
  border: 1px solid #999;
  border-radius: 4px;
  background: linear-gradient(135deg, #aaa 20%, #c4c4c4 20%, #c4c4c4 52%, #dedede 52%, #dedede 80%, #f6f6f6);
}

.rec-controls button:last-child{
  margin-right: 0;
}

.rec-controls .shut{
  margin-right: 1px;
  background: linear-gradient(135deg, #f4f4f4, #d8d8d8 50%, #b8b8b8 50%, #b8b8b8 80%, #8e8e8e 80%);
}

.rec-controls .narrow{
  width: 16px;
  margin-right: 6px;
}

.rec-controls svg{
  width: 18px;
  height: 18px;
}

/* taskbar */
.taskbar{
  display: flex;
  gap: 4px;
  height: 32px;
  border-top: 4px solid #3f5a45;
  background: #3d3d3d;
  color: #fff;
}

.taskbar button{
  display: grid;
  place-items: center;
  width: 45px;
  margin-top: -4px;
  border: 1px solid transparent;
}

.taskbar .start{
  width: 37px;
}

.taskbar .open{
  border-color: #7d8d8d;
  background: #526464;
}

.taskbar .active{
  border-color: #ccc;
  background: #93a09c;
}

.taskbar button svg{
  width: 24px;
  height: 24px;
}

.taskbar .dbx{
  display: grid;
  place-items: center;
  width: 27px;
  height: 27px;
  border-radius: 3px;
  background: #fff;
  color: #1a7fe0;
}

.taskbar .dbx svg{
  width: 20px;
  height: 20px;
}

.word-w{
  fill: #fff;
  font-size: 12px;
  font-weight: 700;
}

.tray{
  display: flex;
  align-items: center;
  gap: 6px;
  margin-left: auto;
  padding-right: 12px;
}

.tray svg{
  width: 14px;
  height: 14px;
}

.tray .keyboard{
  width: 26px;
  height: 16px;
  margin-right: 5px;
}

.help{
  width: 18px;
  height: 18px;
  margin-right: 2px;
  border: 1px solid #fff;
  border-radius: 50%;
  background: #1682c4;
  font-size: 14px;
  font-weight: 700;
  line-height: 16px;
  text-align: center;
}

.tray time{
  width: 46px;
  margin-left: 6px;
  line-height: 14px;
  text-align: center;
  white-space: nowrap;
}
```
